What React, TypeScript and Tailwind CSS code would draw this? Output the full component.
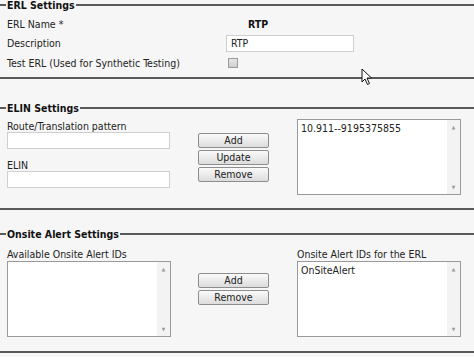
import React from 'react'

const font = { fontFamily: '"DejaVu Sans Condensed", "DejaVu Sans", Verdana, sans-serif' }

function Section({ title, children, className }: { title: string; children: React.ReactNode; className?: string }) {
  return (
    <fieldset className={`border-y-2 border-x-0 border-[#5a5a5a] px-[7px] ${className ?? ''}`}>
      <legend className="ml-[-1px] px-[1px] text-[10.5px] font-bold text-[#111] leading-[12px]">{title}</legend>
      {children}
    </fieldset>
  )
}

function Btn({ label }: { label: string }) {
  return (
    <button className="h-[15px] w-[71px] rounded-[2px] border border-[#8d8d8d] bg-gradient-to-b from-[#fafafa] to-[#dcdcdc] text-[10.5px] leading-[13px] text-[#222]">
      {label}
    </button>
  )
}

function ListBox({ item }: { item?: string }) {
  return (
    <div className="flex h-[76px] w-[164px] border border-[#9a9a9a] bg-white">
      <div className="flex-1 px-[3px] pt-[2px] text-[10.5px] leading-[13px] text-[#222]">{item}</div>
      <div className="flex w-[13px] flex-col items-center justify-between bg-[#f3f3f3] py-[4px] text-[5px] leading-[6px] text-[#999]">
        <span>▲</span>
        <span>▼</span>
      </div>
    </div>
  )
}

export default function App() {
  return (
    <div className="relative h-[357px] w-[474px] overflow-hidden bg-[#f6f6f6] text-[10.5px] text-[#222]" style={font}>
      <Section title="ERL Settings" className="mt-[-1px] h-[80px]">
        <div className="grid grid-cols-[219px_1fr] items-center pt-[4px]">
          <div className="h-[19px] leading-[19px]">ERL Name *</div>
          <div className="pl-[22px] font-bold text-[#111]">RTP</div>
          <div className="h-[19px] leading-[19px]">Description</div>
          <div>
            <div className="h-[17px] w-[128px] border border-[#cfcfcf] bg-white pl-[4px] leading-[15px]">RTP</div>
          </div>
          <div className="h-[20px] leading-[20px]">Test ERL (Used for Synthetic Testing)</div>
          <div>
            <div className="ml-[2px] h-[10px] w-[10px] border border-[#9a9a9a] bg-gradient-to-b from-[#e6e6e6] to-[#cfcfcf]" />
          </div>
        </div>
      </Section>

      <Section title="ELIN Settings" className="mt-[23px] h-[108px]">
        <div className="flex pt-[6px]">
          <div className="w-[164px]">
            <div className="leading-[12px]">Route/Translation pattern</div>
            <div className="mt-[0px] h-[17px] w-[163px] border border-[#cfcfcf] bg-white" />
            <div className="mt-[10px] leading-[12px]">ELIN</div>
            <div className="mt-[0px] h-[17px] w-[163px] border border-[#cfcfcf] bg-white" />
          </div>
          <div className="ml-[27px] mt-[13px] flex flex-col gap-[2px]">
            <Btn label="Add" />
            <Btn label="Update" />
            <Btn label="Remove" />
          </div>
          <div className="ml-[28px] mt-[-1px]">
            <ListBox item="10.911--9195375855" />
          </div>
        </div>
      </Section>

      <Section title="Onsite Alert Settings" className="mt-[18px] h-[125px]">
        <div className="flex pt-[8px]">
          <div>
            <div className="leading-[12px]">Available Onsite Alert IDs</div>
            <div className="mt-[1px]">
              <ListBox />
            </div>
          </div>
          <div className="ml-[27px] mt-[25px] flex flex-col gap-[2px]">
            <Btn label="Add" />
            <Btn label="Remove" />
          </div>
          <div className="ml-[28px]">
            <div className="leading-[12px]">Onsite Alert IDs for the ERL</div>
            <div className="mt-[1px]">
              <ListBox item="OnSiteAlert" />
            </div>
          </div>
        </div>
      </Section>

      <svg className="absolute left-[361px] top-[68px]" width="12" height="18" viewBox="0 0 12 18">
        <path d="M1 1 L1 14 L4 11 L6.5 16.5 L8.5 15.5 L6 10 L10.5 10 Z" fill="white" stroke="#111" strokeWidth="1" />
      </svg>
    </div>
  )
}
